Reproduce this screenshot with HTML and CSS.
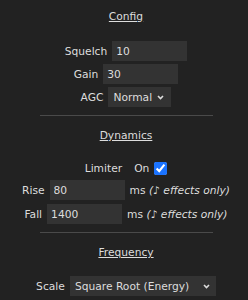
FILE: index.html
```
<!DOCTYPE html>
<html lang="en">
<head>
    <meta charset="UTF-8">
    <meta name="viewport" content="width=device-width, initial-scale=1.0">
    <title>Settings</title>
    <link rel="stylesheet" href="styles.css">
</head>
<body>
    <div class="panel">
        <div class="heading heading-first">Config</div>

        <div class="row row-first">
            <label>Squelch</label>
            <input class="field" type="text" value="10">
        </div>
        <div class="row">
            <label>Gain</label>
            <input class="field" type="text" value="30">
        </div>
        <div class="row">
            <label>AGC</label>
            <span class="select-box select-agc">
                <select>
                    <option>Normal</option>
                    <option>Off</option>
                </select>
                <svg class="chevron" width="7" height="5" viewBox="0 0 7 5"><path d="M1 1 L3.5 3.5 L6 1" fill="none" stroke="#ddd" stroke-width="1.6"/></svg>
            </span>
        </div>

        <div class="divider"></div>

        <div class="heading">Dynamics</div>

        <div class="row row-limiter">
            <label>Limiter</label>
            <span class="on">On</span>
            <input class="check" type="checkbox" checked>
        </div>
        <div class="row row-rise">
            <label>Rise</label>
            <input class="field" type="text" value="80">
            <span class="unit">ms <i>(&#9834; effects only)</i></span>
        </div>
        <div class="row row-fall">
            <label>Fall</label>
            <input class="field" type="text" value="1400">
            <span class="unit">ms <i>(&#9834; effects only)</i></span>
        </div>

        <div class="divider"></div>

        <div class="heading">Frequency</div>

        <div class="row row-scale">
            <label>Scale</label>
            <span class="select-box select-scale">
                <select>
                    <option>Square Root (Energy)</option>
                    <option>Linear</option>
                    <option>Logarithmic</option>
                </select>
                <svg class="chevron" width="7" height="5" viewBox="0 0 7 5"><path d="M1 1 L3.5 3.5 L6 1" fill="none" stroke="#ddd" stroke-width="1.6"/></svg>
            </span>
        </div>
    </div>
</body>
</html>
```
FILE: styles.css
```
body {
    margin: 0;
    background-color: #222;
    color: #ddd;
    font-family: 'DejaVu Sans', Verdana, sans-serif;
    font-size: 10.7px;
}
.panel {
    padding-left: 4px;
}
.heading {
    text-align: center;
    line-height: 14px;
    text-decoration: underline;
    margin-top: 13px;
}
.heading-first {
    margin-top: 10px;
}
.row {
    display: flex;
    justify-content: center;
    align-items: center;
    gap: 5px;
    height: 20px;
    margin-top: 3px;
}
.row-first {
    margin-top: 17px;
}
.row-limiter {
    margin-top: 15px;
}
.row-rise {
    margin-top: 2px;
}
.row-fall {
    margin-top: 4px;
}
.row-scale {
    margin-top: 16px;
}
.field {
    box-sizing: border-box;
    width: 75px;
    height: 20px;
    padding: 0 4px;
    border: none;
    outline: none;
    background-color: #333;
    color: #ddd;
    font: inherit;
}
.on {
    margin-left: 7px;
}
.check {
    width: 13px;
    height: 13px;
    margin: 0;
    accent-color: #1a73ff;
}
.unit i {
    font-style: italic;
}
.select-box {
    position: relative;
    display: inline-block;
    height: 20px;
}
.select-box select {
    -webkit-appearance: none;
    appearance: none;
    box-sizing: border-box;
    height: 20px;
    padding: 0 0 0 5px;
    border: none;
    border-radius: 0;
    outline: none;
    background-color: #333;
    color: #ddd;
    font: inherit;
}
.select-agc select {
    width: 63px;
}
.select-scale select {
    width: 146px;
}
.chevron {
    position: absolute;
    top: 8px;
    pointer-events: none;
}
.select-agc .chevron {
    right: 7px;
}
.select-scale .chevron {
    right: 6px;
}
.divider {
    width: 173px;
    margin: 8px auto 0;
    border-top: 1px solid #4a4a4a;
}
```
